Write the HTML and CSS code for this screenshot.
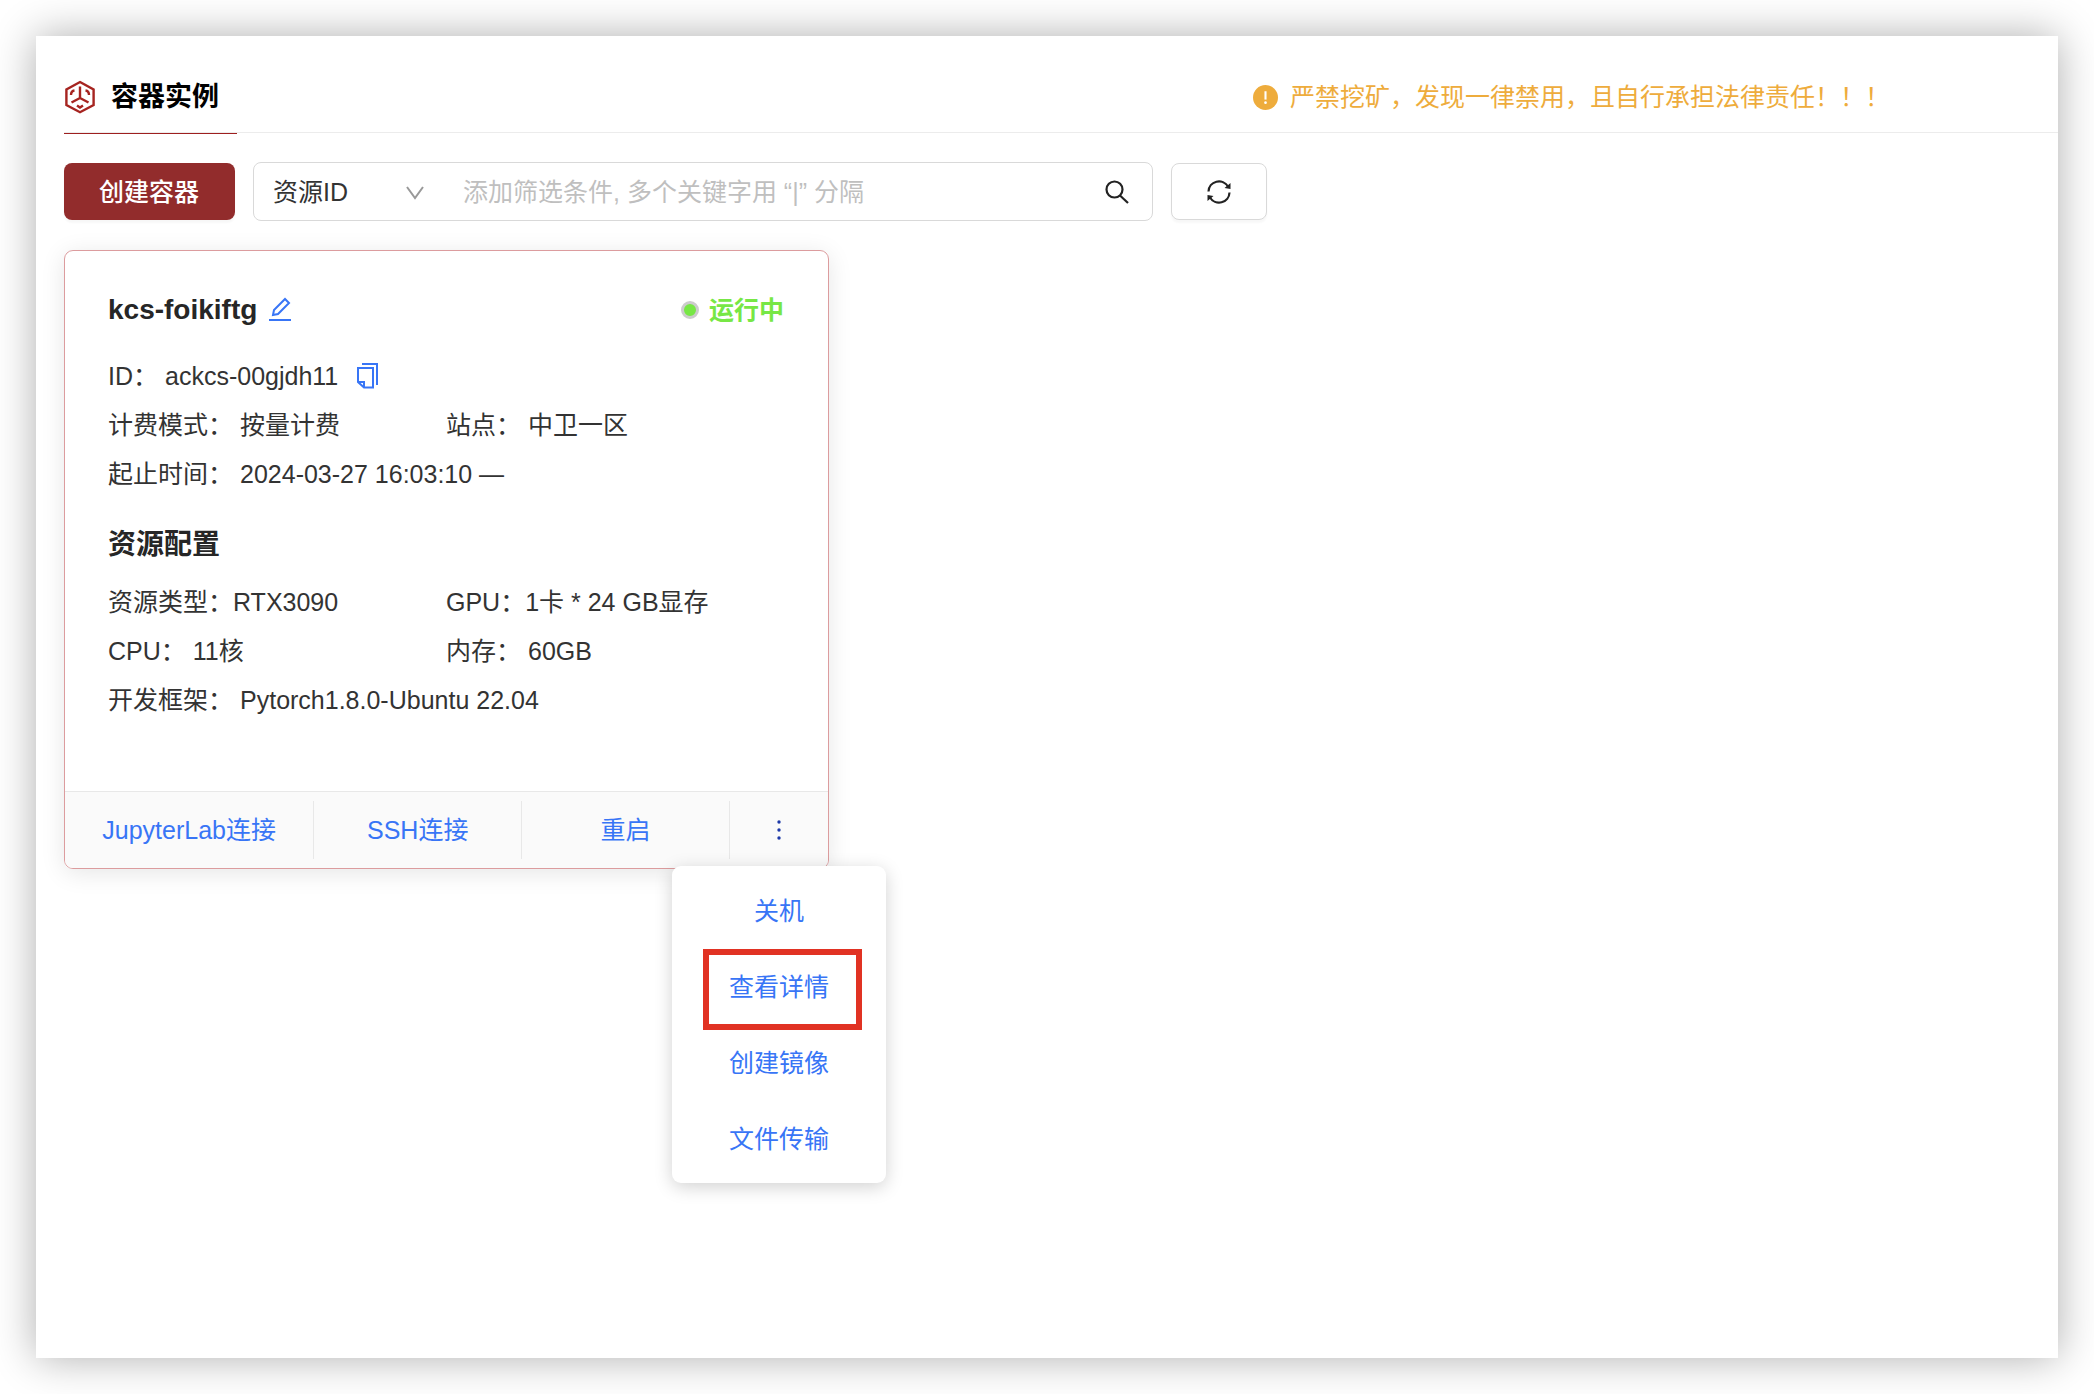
FILE: index.html
```html
<!DOCTYPE html>
<html lang="zh-CN">
<head>
    <meta charset="UTF-8">
    <meta name="viewport" content="width=device-width, initial-scale=1.0">
    <title>容器实例</title>
    <link rel="stylesheet" href="styles.css">
</head>
<body>
    <main class="panel">
        <header class="header">
            <h1 class="title">
                <svg class="logo" viewBox="0 0 30 34" fill="none" stroke="currentColor" stroke-width="2.4">
                    <path d="M15 2 28.6 9.5V25L15 32.2 1.4 25V9.500z"/>
                    <path d="M15 6.5V18M15 18l-8.5 4.500M15 18l8.500 4.500M9.500 10.500Q6 11 6 15M20.500 10.500Q24 11 24 15M12 25.500l3 2 3-2"/>
                </svg>
                容器实例
            </h1>
            <p class="notice">
                <svg class="notice-icon" viewBox="0 0 24 24">
                    <circle cx="12" cy="12" r="12" fill="currentColor"/>
                    <path d="M12 6v8" stroke="#fff" stroke-width="2"/>
                    <circle cx="12" cy="17" r="1.3" fill="#fff"/>
                </svg>
                严禁挖矿，发现一律禁用，且自行承担法律责任！！！
            </p>
        </header>

        <div class="toolbar">
            <button class="btn btn-primary" type="button">创建容器</button>
            <form class="search" role="search">
                <div class="field">
                    <select class="field-select" aria-label="筛选字段">
                        <option>资源ID</option>
                    </select>
                    <svg class="field-arrow" viewBox="0 0 18 14" fill="none" stroke="#999" stroke-width="2">
                        <path d="M1 1l8 11 8-11"/>
                    </svg>
                </div>
                <input class="search-input" type="text" aria-label="关键字" placeholder="添加筛选条件, 多个关键字用 “|” 分隔">
                <button class="search-btn" type="button" aria-label="搜索">
                    <svg viewBox="0 0 24 24" fill="none" stroke="currentColor" stroke-width="2.2">
                        <circle cx="9.5" cy="9.5" r="8"/>
                        <path d="M15 15.500l8 7.500"/>
                    </svg>
                </button>
            </form>
            <button class="btn btn-refresh" type="button" aria-label="刷新">
                <svg viewBox="0 0 24 24" fill="none" stroke="currentColor" stroke-width="2.2">
                    <path d="M1.500 11.500A10.500 10.500 0 0 1 21 6.500M22.500 12.500A10.500 10.500 0 0 1 3 17.500"/>
                    <path d="M23.500 3v6l-6-1zM.5 21v-6l6 1z" fill="currentColor" stroke="none"/>
                </svg>
            </button>
        </div>

        <article class="card">
            <div class="card-body">
                <div class="card-head">
                    <h2 class="name">kcs-foikiftg</h2>
                    <button class="icon-btn" type="button" aria-label="编辑名称">
                        <svg viewBox="0 0 24 26" fill="none" stroke="currentColor" stroke-width="2">
                            <path d="M1 23h22M5 18l1-5L17 2l4 4L10 17z"/>
                        </svg>
                    </button>
                    <span class="status">运行中</span>
                </div>

                <dl class="info">
                    <div class="row wide">
                        <dt>ID：</dt>
                        <dd class="spaced">ackcs-00gjdh11</dd>
                        <button class="icon-btn" type="button" aria-label="复制ID">
                            <svg viewBox="0 0 24 26" fill="none" stroke="currentColor" stroke-width="2">
                                <path d="M6 1h15v21M2 5h15v19.500H8L2 19zM2 19h6v5.500"/>
                            </svg>
                        </button>
                    </div>
                    <div class="row"><dt>计费模式：</dt><dd class="spaced">按量计费</dd></div>
                    <div class="row"><dt>站点：</dt><dd class="spaced">中卫一区</dd></div>
                    <div class="row wide"><dt>起止时间：</dt><dd class="spaced">2024-03-27 16:03:10 —</dd></div>
                </dl>

                <h3 class="subtitle">资源配置</h3>
                <dl class="info">
                    <div class="row"><dt>资源类型：</dt><dd>RTX3090</dd></div>
                    <div class="row"><dt>GPU：</dt><dd>1卡 * 24 GB显存</dd></div>
                    <div class="row"><dt>CPU：</dt><dd class="spaced">11核</dd></div>
                    <div class="row"><dt>内存：</dt><dd class="spaced">60GB</dd></div>
                    <div class="row wide"><dt>开发框架：</dt><dd class="spaced">Pytorch1.8.0-Ubuntu 22.04</dd></div>
                </dl>
            </div>

            <footer class="actions">
                <div class="action action-wide"><a href="#">JupyterLab连接</a></div>
                <div class="action"><a href="#">SSH连接</a></div>
                <div class="action"><a href="#">重启</a></div>
                <div class="more">
                    <button class="more-btn" type="button" aria-label="更多操作" aria-expanded="true">
                        <svg viewBox="0 0 4 20" fill="#1d39a8">
                            <circle cx="2" cy="2" r="1.7"/>
                            <circle cx="2" cy="10" r="1.7"/>
                            <circle cx="2" cy="18" r="1.7"/>
                        </svg>
                    </button>
                    <ul class="menu">
                        <li><a href="#">关机</a></li>
                        <li class="marked"><a href="#">查看详情</a></li>
                        <li><a href="#">创建镜像</a></li>
                        <li><a href="#">文件传输</a></li>
                    </ul>
                </div>
            </footer>
        </article>
    </main>
</body>
</html>
```

FILE: styles.css
```css
*, *::before, *::after {
    box-sizing: border-box;
}
body {
    margin: 0;
    padding: 36px;
    background-color: #fff;
    color: #333;
    font-family: "Liberation Sans", "Noto Sans CJK SC", sans-serif;
    font-size: 25px;
    line-height: 48px;
}
h1, h2, h3, p, dl, dd, ul {
    margin: 0;
    padding: 0;
}
ul {
    list-style: none;
}
button, input, select {
    font: inherit;
    color: inherit;
}
button {
    display: flex;
    align-items: center;
    justify-content: center;
    padding: 0;
    border: none;
    background: none;
    cursor: pointer;
}
a {
    color: #3875f6;
    text-decoration: none;
}
svg {
    display: block;
    flex: none;
}
.panel {
    min-height: calc(100vh - 72px);
    padding: 24px 0 28px 28px;
    background-color: #fff;
    box-shadow: 0 0 40px rgba(0, 0, 0, 0.32);
}

/* header */
.header {
    display: flex;
    align-items: stretch;
    justify-content: space-between;
    height: 73px;
    border-bottom: 1px solid #ececec;
}
.title {
    display: flex;
    align-items: center;
    gap: 15px;
    height: 74px;
    padding: 1px 18px 0 0;
    border-bottom: 1px solid #9e1f1f;
    color: #000;
    font-size: 27px;
    font-weight: 600;
}
.logo {
    width: 32px;
    height: 34px;
    color: #a62420;
}
.notice {
    display: flex;
    align-items: center;
    gap: 12px;
    padding: 2px 168px 0 0;
    color: #eeac3c;
}
.notice-icon {
    width: 25px;
    height: 25px;
}

/* toolbar */
.toolbar {
    display: flex;
    align-items: center;
    gap: 18px;
    margin: 29px 28px 29px 0;
}
.btn {
    height: 57px;
    border-radius: 8px;
    box-shadow: 0 3px 2px rgba(0, 0, 0, 0.03);
}
.btn-primary {
    padding: 0 36px 0 35px;
    background-color: #922c2c;
    color: #fff;
    font-weight: 500;
}
.btn-refresh {
    width: 96px;
    border: 1px solid #d9d9d9;
    background-color: #fff;
}
.btn-refresh svg, .search-btn svg {
    width: 24px;
    height: 24px;
    color: #222;
}
.search {
    display: flex;
    flex: 1;
    max-width: 900px;
    height: 59px;
    border: 1px solid #d9d9d9;
    border-radius: 8px;
}
.field {
    position: relative;
    display: flex;
    width: 190px;
}
.field-select {
    flex: 1;
    padding: 0 0 0 19px;
    border: none;
    background: none;
    appearance: none;
}
.field-arrow {
    position: absolute;
    top: 23px;
    right: 20px;
    width: 18px;
    height: 14px;
    pointer-events: none;
}
.search-input {
    flex: 1;
    min-width: 0;
    padding: 0 0 0 19px;
    border: none;
    background: none;
    outline: none;
}
.search-input::placeholder {
    color: #bfbfbf;
}
.search-btn {
    width: 70px;
}

/* instance card */
.card {
    max-width: 765px;
    border: 1px solid #dc9c9e;
    border-radius: 9px;
    box-shadow: 0 4px 24px rgba(0, 0, 0, 0.1);
}
.card-body {
    padding: 35px 44px 67px 43px;
}
.card-head {
    display: flex;
    align-items: center;
    gap: 11px;
    margin-bottom: 18px;
}
.name {
    color: #262626;
    font-size: 28px;
    font-weight: 600;
}
.icon-btn {
    color: #3875f6;
}
.icon-btn svg {
    width: 24px;
    height: 26px;
}
.status {
    display: flex;
    align-items: center;
    gap: 10px;
    margin-left: auto;
    color: #77e745;
    font-weight: 600;
}
.status::before {
    content: "";
    width: 18px;
    height: 18px;
    border: 3px solid #ccc;
    border-radius: 50%;
    background-color: #77e745;
}
.info {
    display: grid;
    grid-template-columns: 1fr 1fr;
    row-gap: 1px;
}
.row {
    display: flex;
    align-items: center;
    white-space: nowrap;
}
.wide {
    grid-column: 1 / -1;
}
.spaced {
    margin-left: 7px;
}
.row .icon-btn {
    margin-left: 18px;
}
.subtitle {
    margin: 23px 0 9px;
    color: #262626;
    font-size: 28px;
    font-weight: 600;
}

/* card footer */
.actions {
    display: flex;
    border-top: 1px solid #e8e8e8;
    border-radius: 0 0 8px 8px;
    background-color: #fafafa;
}
.action {
    flex: 10;
    margin: 9px 0;
    padding: 5px 0;
    border-right: 1px solid #e8e8e8;
    text-align: center;
}
.action-wide {
    flex: 12;
}
.more {
    position: relative;
    display: flex;
    justify-content: center;
    width: 98px;
}
.more-btn {
    width: 100%;
}
.more-btn svg {
    width: 4px;
    height: 20px;
}
.menu {
    position: absolute;
    top: calc(100% - 2px);
    left: 50%;
    width: 214px;
    padding: 7px 0 6px;
    border-radius: 9px;
    background-color: #fff;
    box-shadow: 0 4px 18px rgba(0, 0, 0, 0.18);
    text-align: center;
    transform: translateX(-50%);
}
.menu li {
    position: relative;
    padding: 14px 0;
}
.marked::after {
    content: "";
    position: absolute;
    inset: 0 24px -5px 31px;
    border: 6px solid #e13223;
    pointer-events: none;
}
```
